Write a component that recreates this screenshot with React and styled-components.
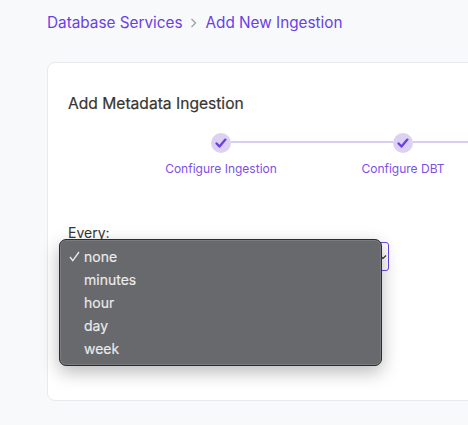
import React from 'react'
import styled, { createGlobalStyle } from 'styled-components'

const steps = ['Configure Ingestion', 'Configure DBT']
const frequencies = ['none', 'minutes', 'hour', 'day', 'week']

function CheckMark() {
  return (
    <svg width='12' height='12' viewBox='0 0 12 12' fill='none'>
      <path d='M1.6 6.4L4.5 9.6L10.4 2.6' stroke='#6b3fe0' strokeWidth='2.3' strokeLinecap='round' strokeLinejoin='round' />
    </svg>
  )
}

function MenuTick() {
  return (
    <svg width='11' height='11' viewBox='0 0 11 11' fill='none'>
      <path d='M1 6L3.8 9.6L10 1' stroke='#ececec' strokeWidth='1.3' />
    </svg>
  )
}

function Chevron() {
  return (
    <svg width='8' height='8' viewBox='0 0 8 8' fill='none'>
      <path d='M1 2.5L4 5.5L7 2.5' stroke='#37352f' strokeWidth='1.2' />
    </svg>
  )
}

function BreadcrumbArrow() {
  return (
    <svg width='7' height='10' viewBox='0 0 7 10' fill='none'>
      <path d='M1.5 1L5.5 5L1.5 9' stroke='#a3a3ab' strokeWidth='1.4' />
    </svg>
  )
}

export default function App() {
  return (
    <Page>
      <GlobalStyle />
      <Breadcrumb>
        <Crumb>Database Services</Crumb>
        <BreadcrumbArrow />
        <Crumb>Add New Ingestion</Crumb>
      </Breadcrumb>
      <Card>
        <Title>Add Metadata Ingestion</Title>
        <Stepper>
          {steps.map((label, i) => (
            <Step key={label}>
              <StepHead>
                <Connector $hidden={i === 0} />
                <Circle><CheckMark /></Circle>
                <Connector />
              </StepHead>
              <StepLabel>{label}</StepLabel>
            </Step>
          ))}
        </Stepper>
        <Field>
          <FieldLabel>Every:</FieldLabel>
          <SelectBox><Chevron /></SelectBox>
          <Menu>
            {frequencies.map((item, i) => (
              <MenuItem key={item}>
                <TickSlot>{i === 0 && <MenuTick />}</TickSlot>
                {item}
              </MenuItem>
            ))}
          </Menu>
        </Field>
      </Card>
    </Page>
  )
}

const GlobalStyle = createGlobalStyle`
  html, body {
    margin: 0;
    height: 100%;
    overflow: hidden;
    background: #f8f9fa;
  }
`

const Page = styled.div`
  width: 900px;
  height: 425px;
  padding: 12px 0 0 47px;
  box-sizing: border-box;
  font-family: Inter, "Liberation Sans", sans-serif;
  background: #f8f9fa;
`

const Breadcrumb = styled.nav`
  display: flex;
  align-items: center;
  gap: 8px;
  height: 21px;
  margin-bottom: 29px;
`

const Crumb = styled.span`
  font-size: 15.3px;
  line-height: 21px;
  color: #6a3fe6;
`

const Card = styled.section`
  box-sizing: border-box;
  width: 760px;
  height: 339px;
  padding: 31px 20px 0;
  background: #fff;
  border: 1px solid #e8eaed;
  border-radius: 8px;
`

const Title = styled.h2`
  margin: 0 0 19px;
  font-size: 15.6px;
  font-weight: 400;
  line-height: 20px;
  color: #37352f;
  -webkit-text-stroke: 0.2px #37352f;
`

const Stepper = styled.div`
  display: flex;
  margin-left: 62px;
  margin-bottom: 47px;
`

const Step = styled.div`
  width: 182px;
  display: flex;
  flex-direction: column;
  align-items: center;
`

const StepHead = styled.div`
  width: 100%;
  display: grid;
  grid-template-columns: 1fr 20px 1fr;
  align-items: center;
`

const Connector = styled.span`
  height: 2px;
  margin-top: -2px;
  background: ${({ $hidden }) => ($hidden ? 'transparent' : '#d9cef2')};
`

const Circle = styled.span`
  width: 20px;
  height: 20px;
  border-radius: 50%;
  background: #dcd1f2;
  display: flex;
  align-items: center;
  justify-content: center;
`

const StepLabel = styled.span`
  margin-top: 8px;
  font-size: 12px;
  line-height: 16px;
  color: #7c50e8;
  white-space: nowrap;
`

const Field = styled.div`
  position: relative;
  width: 321px;
`

const FieldLabel = styled.label`
  display: block;
  font-size: 14px;
  line-height: 18px;
  color: #37352f;
`

const SelectBox = styled.div`
  box-sizing: border-box;
  height: 29px;
  border: 1px solid #7147e8;
  border-radius: 3px;
  background: #fff;
  display: flex;
  align-items: center;
  justify-content: flex-end;
  padding-right: 1px;
`

const Menu = styled.ul`
  position: absolute;
  left: -9px;
  top: 15px;
  width: 323px;
  height: 127px;
  box-sizing: border-box;
  margin: 0;
  padding: 5px 0 0;
  list-style: none;
  background: #68696c;
  border: 1px solid #2b2b2c;
  border-radius: 7px;
  box-shadow: inset 0 0 0 1px #7b7c7f, 0 6px 18px rgba(0, 0, 0, 0.28);
`

const MenuItem = styled.li`
  display: flex;
  align-items: center;
  height: 23px;
  font-size: 14px;
  color: #ececec;
  -webkit-text-stroke: 0.15px #ececec;
`

const TickSlot = styled.span`
  width: 24px;
  padding-left: 9px;
  box-sizing: border-box;
  display: flex;
  align-items: center;
`
